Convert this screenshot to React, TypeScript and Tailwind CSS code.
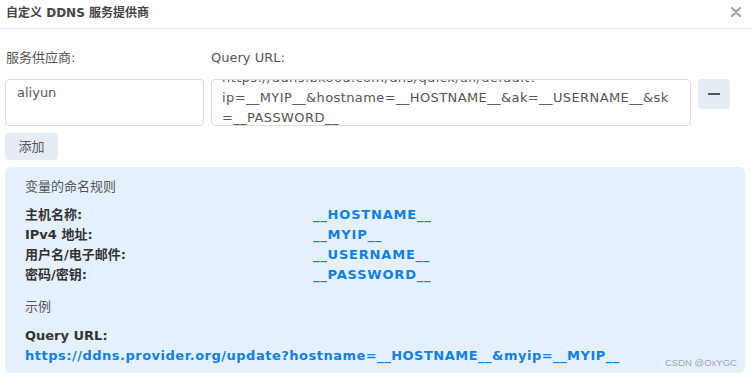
import React from "react";

const rules = [
  { label: "主机名称:", value: "__HOSTNAME__" },
  { label: "IPv4 地址:", value: "__MYIP__" },
  { label: "用户名/电子邮件:", value: "__USERNAME__" },
  { label: "密码/密钥:", value: "__PASSWORD__" },
];

const urlLines = [
  "https://ddns.bkood.com/dns/quick/ali/default?",
  "ip=__MYIP__&hostname=__HOSTNAME__&ak=__USERNAME__&sk",
  "=__PASSWORD__",
];

export default function App() {
  return (
    <div className="relative w-[752px] h-[378px] overflow-hidden bg-white text-[13px] leading-[20px] text-[#555] font-['DejaVu_Sans','Noto_Sans_CJK_SC',sans-serif]">
      {/* Header */}
      <div className="flex h-[29px] items-center justify-between border-b border-[#e4e8ed] pl-[6px] pr-[11px] pb-[2px]">
        <div className="text-[12px] font-bold text-[#444]">自定义 DDNS 服务提供商</div>
        <svg width="10" height="10" viewBox="0 0 10 10" className="mt-[-2px]">
          <path d="M1 1L9 9M9 1L1 9" stroke="#9a9fa5" strokeWidth="2" strokeLinecap="round" />
        </svg>
      </div>

      <div className="px-[5px]">
        {/* Labels */}
        <div className="mt-[19px] grid grid-cols-[199px_480px_32px] gap-x-[7px]">
          <div className="pl-[1px]">服务供应商:</div>
          <div>Query URL:</div>
          <div />
        </div>

        {/* Inputs */}
        <div className="mt-[11px] grid grid-cols-[199px_480px_32px] gap-x-[7px] items-start">
          <div className="h-[47px] rounded-[4px] border border-[#d3dbe4] bg-white pl-[11px] pt-[3px]">
            aliyun
          </div>
          <div className="h-[47px] overflow-hidden rounded-[4px] border border-[#d3dbe4] bg-white pl-[10px]">
            <div className="mt-[-12px] whitespace-pre tracking-[0.4px]">
              {urlLines.map((l, i) => (
                <div key={i}>{l}</div>
              ))}
            </div>
          </div>
          <button className="flex h-[30px] w-[32px] items-center justify-center rounded-[4px] bg-[#e6ecf4]">
            <span className="block h-[2px] w-[12px] bg-[#4d5561]" />
          </button>
        </div>

        {/* Add button */}
        <button className="mt-[7px] flex h-[27px] w-[53px] items-center justify-center rounded-[4px] bg-[#e6ecf4] text-[#555]">
          添加
        </button>

        {/* Info box */}
        <div className="mt-[7px] h-[206px] w-[740px] rounded-[6px] bg-[#e4f1fd] px-[20px] pt-[10px]">
          <div>变量的命名规则</div>
          <div className="mt-[8px] grid grid-cols-[288px_1fr] font-bold">
            {rules.map((r) => (
              <React.Fragment key={r.value}>
                <div className="text-[#333]">{r.label}</div>
                <div className="text-[#0f80e6] tracking-[0.8px]">{r.value}</div>
              </React.Fragment>
            ))}
          </div>
          <div className="mt-[12px]">示例</div>
          <div className="mt-[9px] font-bold text-[#333]">Query URL:</div>
          <div className="font-bold text-[#0f80e6] tracking-[0.5px]">
            https://ddns.provider.org/update?hostname=__HOSTNAME__&amp;myip=__MYIP__
          </div>
        </div>
      </div>

      {/* Watermark */}
      <div className="absolute left-[665px] top-[356px] text-[9.5px] leading-[14px] text-[#a3a3a3] font-['Liberation_Sans',sans-serif]">
        CSDN @OxYGC
      </div>
    </div>
  );
}
